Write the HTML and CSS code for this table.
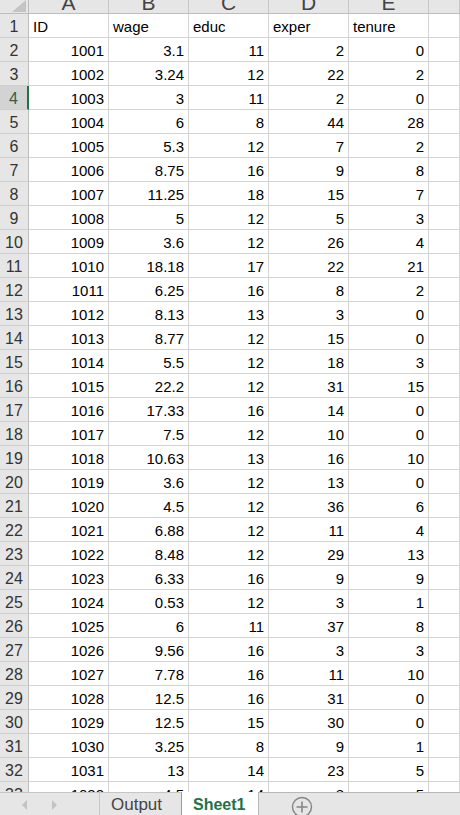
FILE: index.html
```html
<!DOCTYPE html>
<html>
<head>
<meta charset="utf-8">
<link rel="stylesheet" href="styles.css">
</head>
<body>
<div class="app">
  <div class="sheet">
    <div class="grid">
      <div class="corner"><svg width="28" height="13" viewBox="0 0 28 13"><polygon points="12,12 26,12 26,0" fill="#c4c4c4"/></svg></div>
      <div class="colh">A</div><div class="colh">B</div><div class="colh">C</div><div class="colh">D</div><div class="colh">E</div><div class="colh"></div>

      <div class="rowh">1</div><div class="c l">ID</div><div class="c l">wage</div><div class="c l">educ</div><div class="c l">exper</div><div class="c l">tenure</div><div class="c"></div>
      <div class="rowh">2</div><div class="c">1001</div><div class="c">3.1</div><div class="c">11</div><div class="c">2</div><div class="c">0</div><div class="c"></div>
      <div class="rowh">3</div><div class="c">1002</div><div class="c">3.24</div><div class="c">12</div><div class="c">22</div><div class="c">2</div><div class="c"></div>
      <div class="rowh sel">4</div><div class="c">1003</div><div class="c">3</div><div class="c">11</div><div class="c">2</div><div class="c">0</div><div class="c"></div>
      <div class="rowh">5</div><div class="c">1004</div><div class="c">6</div><div class="c">8</div><div class="c">44</div><div class="c">28</div><div class="c"></div>
      <div class="rowh">6</div><div class="c">1005</div><div class="c">5.3</div><div class="c">12</div><div class="c">7</div><div class="c">2</div><div class="c"></div>
      <div class="rowh">7</div><div class="c">1006</div><div class="c">8.75</div><div class="c">16</div><div class="c">9</div><div class="c">8</div><div class="c"></div>
      <div class="rowh">8</div><div class="c">1007</div><div class="c">11.25</div><div class="c">18</div><div class="c">15</div><div class="c">7</div><div class="c"></div>
      <div class="rowh">9</div><div class="c">1008</div><div class="c">5</div><div class="c">12</div><div class="c">5</div><div class="c">3</div><div class="c"></div>
      <div class="rowh">10</div><div class="c">1009</div><div class="c">3.6</div><div class="c">12</div><div class="c">26</div><div class="c">4</div><div class="c"></div>
      <div class="rowh">11</div><div class="c">1010</div><div class="c">18.18</div><div class="c">17</div><div class="c">22</div><div class="c">21</div><div class="c"></div>
      <div class="rowh">12</div><div class="c">1011</div><div class="c">6.25</div><div class="c">16</div><div class="c">8</div><div class="c">2</div><div class="c"></div>
      <div class="rowh">13</div><div class="c">1012</div><div class="c">8.13</div><div class="c">13</div><div class="c">3</div><div class="c">0</div><div class="c"></div>
      <div class="rowh">14</div><div class="c">1013</div><div class="c">8.77</div><div class="c">12</div><div class="c">15</div><div class="c">0</div><div class="c"></div>
      <div class="rowh">15</div><div class="c">1014</div><div class="c">5.5</div><div class="c">12</div><div class="c">18</div><div class="c">3</div><div class="c"></div>
      <div class="rowh">16</div><div class="c">1015</div><div class="c">22.2</div><div class="c">12</div><div class="c">31</div><div class="c">15</div><div class="c"></div>
      <div class="rowh">17</div><div class="c">1016</div><div class="c">17.33</div><div class="c">16</div><div class="c">14</div><div class="c">0</div><div class="c"></div>
      <div class="rowh">18</div><div class="c">1017</div><div class="c">7.5</div><div class="c">12</div><div class="c">10</div><div class="c">0</div><div class="c"></div>
      <div class="rowh">19</div><div class="c">1018</div><div class="c">10.63</div><div class="c">13</div><div class="c">16</div><div class="c">10</div><div class="c"></div>
      <div class="rowh">20</div><div class="c">1019</div><div class="c">3.6</div><div class="c">12</div><div class="c">13</div><div class="c">0</div><div class="c"></div>
      <div class="rowh">21</div><div class="c">1020</div><div class="c">4.5</div><div class="c">12</div><div class="c">36</div><div class="c">6</div><div class="c"></div>
      <div class="rowh">22</div><div class="c">1021</div><div class="c">6.88</div><div class="c">12</div><div class="c">11</div><div class="c">4</div><div class="c"></div>
      <div class="rowh">23</div><div class="c">1022</div><div class="c">8.48</div><div class="c">12</div><div class="c">29</div><div class="c">13</div><div class="c"></div>
      <div class="rowh">24</div><div class="c">1023</div><div class="c">6.33</div><div class="c">16</div><div class="c">9</div><div class="c">9</div><div class="c"></div>
      <div class="rowh">25</div><div class="c">1024</div><div class="c">0.53</div><div class="c">12</div><div class="c">3</div><div class="c">1</div><div class="c"></div>
      <div class="rowh">26</div><div class="c">1025</div><div class="c">6</div><div class="c">11</div><div class="c">37</div><div class="c">8</div><div class="c"></div>
      <div class="rowh">27</div><div class="c">1026</div><div class="c">9.56</div><div class="c">16</div><div class="c">3</div><div class="c">3</div><div class="c"></div>
      <div class="rowh">28</div><div class="c">1027</div><div class="c">7.78</div><div class="c">16</div><div class="c">11</div><div class="c">10</div><div class="c"></div>
      <div class="rowh">29</div><div class="c">1028</div><div class="c">12.5</div><div class="c">16</div><div class="c">31</div><div class="c">0</div><div class="c"></div>
      <div class="rowh">30</div><div class="c">1029</div><div class="c">12.5</div><div class="c">15</div><div class="c">30</div><div class="c">0</div><div class="c"></div>
      <div class="rowh">31</div><div class="c">1030</div><div class="c">3.25</div><div class="c">8</div><div class="c">9</div><div class="c">1</div><div class="c"></div>
      <div class="rowh">32</div><div class="c">1031</div><div class="c">13</div><div class="c">14</div><div class="c">23</div><div class="c">5</div><div class="c"></div>
      <div class="rowh">33</div><div class="c">1032</div><div class="c">4.5</div><div class="c">14</div><div class="c">8</div><div class="c">5</div><div class="c"></div>
    </div>
  </div>
  <div class="tabbar">
    <div class="nav">
      <svg width="8" height="12" viewBox="0 0 8 12"><polygon points="6,1 1,6 6,11" fill="#c3c3c3"/></svg>
      <svg width="8" height="12" viewBox="0 0 8 12"><polygon points="2,1 7,6 2,11" fill="#c3c3c3"/></svg>
    </div>
    <div class="tab">Output</div>
    <div class="tab active">Sheet1</div>
    <div class="rest">
      <svg class="plus" width="22" height="22" viewBox="0 0 22 22"><circle cx="11" cy="11" r="9.5" fill="none" stroke="#858585" stroke-width="1.4"/><path d="M11 5.5V16.5M5.5 11H16.5" stroke="#858585" stroke-width="1.6"/></svg>
    </div>
  </div>
</div>
</body>
</html>
```

FILE: styles.css
```css
* { box-sizing: border-box; }
html, body { margin: 0; padding: 0; }
body {
  width: 460px;
  height: 815px;
  overflow: hidden;
  background: #fff;
  font-family: "Liberation Sans", Arial, sans-serif;
}
.app {
  display: flex;
  flex-direction: column;
  height: 815px;
}
.sheet {
  flex: 1;
  overflow: hidden;
  min-height: 0;
}
.grid {
  display: grid;
  grid-template-columns: 29px repeat(5, 80px) 1fr;
  grid-template-rows: 14px;
  grid-auto-rows: 24px;
}
.corner {
  background: #e6e6e6;
  border-right: 1px solid #bdbdbd;
  border-bottom: 1px solid #bdbdbd;
  display: flex;
  align-items: flex-start;
}
.corner svg { display: block; }
.colh {
  background: #e6e6e6;
  border-right: 1px solid #c6c6c6;
  border-bottom: 1px solid #bdbdbd;
  color: #444;
  font-size: 21px;
  line-height: 6px;
  text-align: center;
  overflow: visible;
}
.rowh {
  background: #e6e6e6;
  border-right: 1px solid #bdbdbd;
  border-bottom: 1px solid #cfcfcf;
  color: #333;
  font-size: 16px;
  line-height: 25px;
  text-align: center;
  overflow: hidden;
}
.rowh.sel {
  background: #d3d3d3;
  color: #3a5a46;
  border-right: 2px solid #217346;
}
.c {
  border-right: 1px solid #d4d4d4;
  border-bottom: 1px solid #d4d4d4;
  font-size: 15px;
  line-height: 26px;
  color: #000;
  text-align: right;
  padding: 0 4px 0 4px;
  overflow: hidden;
  white-space: nowrap;
}
.c.l { text-align: left; }

.tabbar {
  height: 23px;
  flex: none;
  display: flex;
  background: #e6e6e6;
}
.nav {
  width: 100px;
  border-top: 1px solid #c6c6c6;
  border-right: 1px solid #c6c6c6;
  display: flex;
  align-items: center;
  padding: 2px 0 0 21px;
  gap: 21px;
}
.nav svg { display: block; }
.tab {
  width: 82px;
  border-top: 1px solid #c6c6c6;
  border-right: 1px solid #9a9a9a;
  font-size: 17px;
  line-height: 22px;
  color: #444;
  padding-left: 11px;
  padding-top: 1px;
}
.tab.active {
  width: 77px;
  background: #fff;
  border-top: none;
  border-right: 1px solid #b8b8b8;
  color: #217346;
  font-weight: bold;
  font-size: 16px;
  padding-left: 11px;
  padding-top: 2px;
}
.rest {
  flex: 1;
  border-top: 1px solid #b8b8b8;
  display: flex;
  align-items: flex-start;
  padding-left: 32px;
  padding-top: 3px;
}
.plus { display: block; }
```
